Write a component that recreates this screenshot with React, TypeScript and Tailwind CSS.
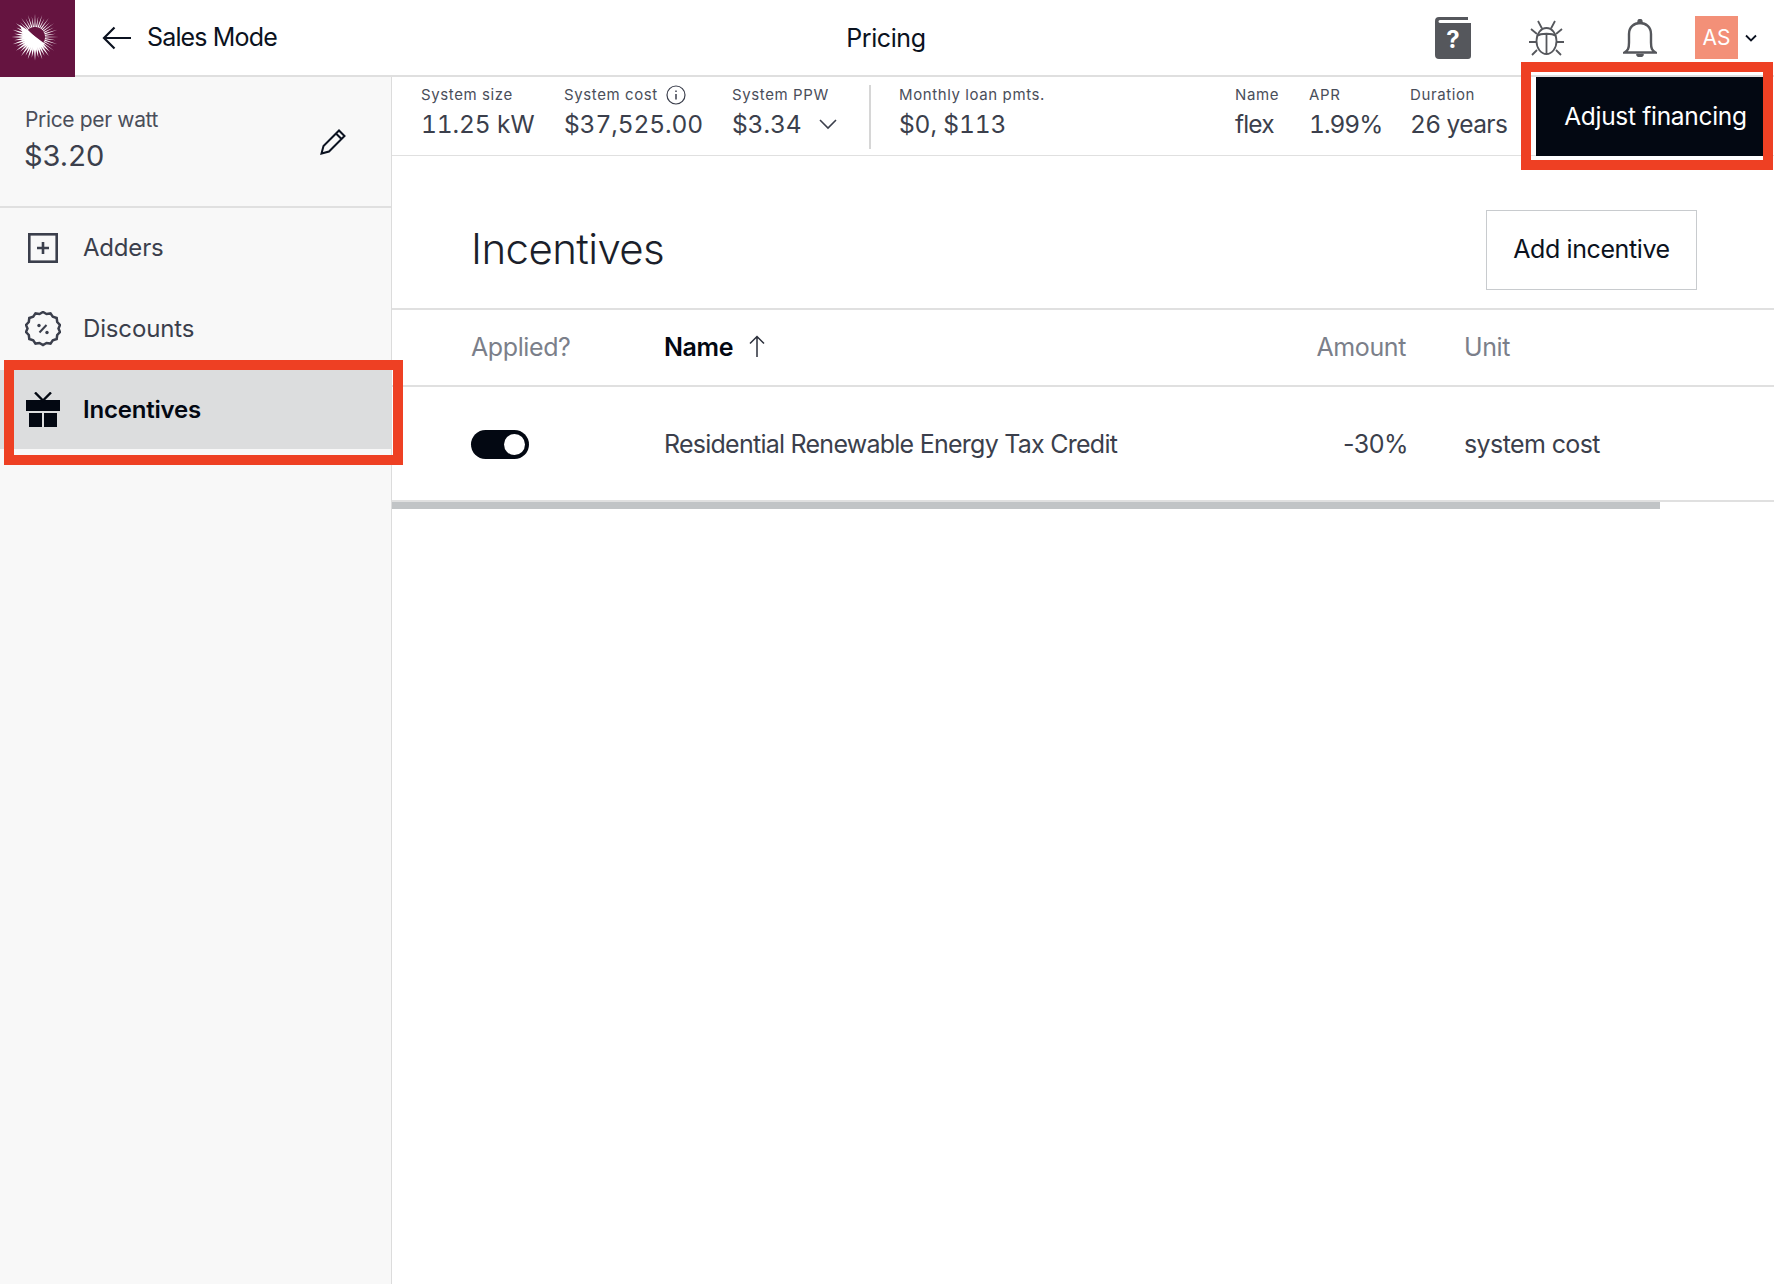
const rays = Array.from({ length: 40 }, (_, i) => i * 9);

function Logo() {
  return (
    <svg width="50" height="50" viewBox="-25 -25 50 50">
      {rays.map((a) => {
        // lower-left half of the burst is solid wedges, upper-right is thin rays
        const rel = ((a - 37 + 360) % 360);
        const solid = rel > 0 && rel < 180;
        const t = (a * Math.PI) / 180;
        const r = a % 18 === 0 ? 23.5 : 21;
        const inner = solid ? 0 : 10;
        const w = solid ? 1.35 : 0.6;
        const cx = Math.cos(t);
        const sy = Math.sin(t);
        const pts = solid
          ? `${cx * inner},${sy * inner} ${cx * 9 - sy * w},${sy * 9 + cx * w} ${cx * r},${sy * r} ${cx * 9 + sy * w},${sy * 9 - cx * w}`
          : `${cx * inner - sy * w},${sy * inner + cx * w} ${cx * r},${sy * r} ${cx * inner + sy * w},${sy * inner - cx * w}`;
        return <polygon key={a} points={pts} fill="#fff" />;
      })}
      <polygon points="-15,-12 10,7 -2,10 -9,6" fill="#fff" />
    </svg>
  );
}

function Stat({ label, value, className, valueClass, extra, chevron }: { label: string; value: string; className: string; valueClass?: string; extra?: boolean; chevron?: boolean }) {
  return (
    <div className={className}>
      <div className="flex items-center gap-2 text-[15px] leading-[20px] tracking-[0.6px] text-[#4a4e5a]">
        {label}
        {extra && (
          <svg width="20" height="20" viewBox="0 0 20 20" fill="none" stroke="#3b3f4c" strokeWidth="1.2">
            <circle cx="10" cy="10" r="9" />
            <path d="M10 9v5.5M10 5.5v1.6" strokeWidth="1.5" />
          </svg>
        )}
      </div>
      <div className={`mt-[3px] flex items-center text-[24.5px] leading-[32px] text-[#3b3f4c] tabular-nums ${valueClass ?? 'tracking-[-0.1px]'}`}>
        {value}
        {chevron && (
          <svg className="ml-[17px]" width="20" height="12" viewBox="0 0 20 12" fill="none" stroke="#3b3f4c" strokeWidth="1.6">
            <path d="M2 2l8 8 8-8" />
          </svg>
        )}
      </div>
    </div>
  );
}

export default function App() {
  return (
    <div className="relative flex h-[1284px] w-[1774px] flex-col overflow-hidden bg-white font-['Inter',sans-serif]">
      <header className="flex h-[77px] shrink-0 items-start border-b-2 border-[#dfdfdf]">
        <div className="flex h-[77px] w-[75px] shrink-0 items-center justify-center bg-[#651440] pb-[3px] pr-[5px]">
          <Logo />
        </div>
        <div className="ml-[27px] flex h-[75px] items-center">
          <svg width="30" height="24" viewBox="0 0 30 24" fill="none" stroke="#0b1220" strokeWidth="2.2">
            <path d="M29 12H2M12.5 1.5L2 12l10.5 10.5" />
          </svg>
          <span className="ml-[15px] pt-[1px] text-[25px] tracking-[-0.85px] text-[#0b1220]">Sales Mode</span>
        </div>
        <div className="ml-[569px] flex h-[75px] w-[80px] items-center justify-center pt-[2px] text-[25px] tracking-[-0.4px] text-[#0b1220]">Pricing</div>
        <div className="ml-[509px] flex h-[75px] items-center">
          <div className="relative h-[42px] w-[36px]">
            <svg width="36" height="42" viewBox="0 0 36 42">
              <path d="M4 0h29v3H5C3 3 3 6 5 6h31v33a3 3 0 0 1-3 3H4a4 4 0 0 1-4-4V4a4 4 0 0 1 4-4z" fill="#55575c" />
            </svg>
            <span className="absolute left-0 top-[8px] w-full text-center text-[24px] font-bold leading-[30px] text-white">?</span>
          </div>
          <svg className="ml-[58px]" width="36" height="36" viewBox="0 0 36 36" fill="none" stroke="#55575c" strokeWidth="1.8">
            <ellipse cx="17.5" cy="21" rx="10" ry="13" />
            <path d="M8 16c4-3 15-3 19 0M17.5 14.5V34M13 8.5L9 1M22 8.5L26 1M8 14L2 9M27 14l6-5M0 22h7.5M27.5 22H35M8 30l-5 5M27 30l5 5" />
          </svg>
          <svg className="ml-[58px]" width="34" height="38" viewBox="0 0 34 38" fill="none" stroke="#55575c" strokeWidth="2.4">
            <path d="M1.5 33.5c3.5-2 4.5-4 4.5-10V15c0-7 5-11 11-11s11 4 11 11v8.500c0 6 1 8 4.500 10z" />
            <circle cx="17" cy="2.500" r="1.500" fill="#55575c" />
            <path d="M14 35c1 3 5 3 6 0" fill="#55575c" />
          </svg>
          <div className="ml-[38px] flex h-[43px] w-[43px] items-center justify-center bg-[#f39078] text-[21px] text-white">AS</div>
          <svg className="ml-[7px]" width="12" height="8" viewBox="0 0 12 8" fill="none" stroke="#0b1220" strokeWidth="1.8">
            <path d="M1 1.5l5 5 5-5" />
          </svg>
        </div>
      </header>

      <div className="flex min-h-0 flex-1">
        <aside className="w-[392px] shrink-0 border-r border-[#dcdcdc] bg-[#f8f8f8]">
          <div className="flex h-[131px] items-center justify-between border-b-2 border-[#e0e0e0] pl-[25px] pr-[44px]">
            <div className="-mt-[3px]">
              <div className="text-[21px] leading-[28px] tracking-[-0.35px] text-[#4a4e5a]">Price per watt</div>
              <div className="mt-[4px] -ml-[1px] text-[29px] leading-[36px] text-[#3b3f4c]">$3.20</div>
            </div>
            <svg width="27" height="27" viewBox="0 0 27 27" fill="none" stroke="#0b1220" strokeWidth="2">
              <path d="M1.5 25.5l2-7.500L19 2.500l5.500 5.500L9 23.500zM16 5.500l5.500 5.500" />
            </svg>
          </div>
          <nav>
            <div className="flex h-[79px] items-center pl-[28px] text-[24px] tracking-[-0.2px] text-[#3b3f4c]">
              <svg width="30" height="30" viewBox="0 0 30 30" fill="none" stroke="#3b3f4c" strokeWidth="2.6">
                <rect x="1.300" y="1.300" width="27.400" height="27.400" />
                <path d="M15 9v12M9 15h12" />
              </svg>
              <span className="ml-[25px]">Adders</span>
            </div>
            <div className="flex h-[83px] items-center pl-[25px] text-[24px] tracking-[-0.15px] text-[#3b3f4c]">
              <svg width="36" height="36" viewBox="0 0 36 36" fill="none" stroke="#3b3f4c" strokeWidth="2.5">
                <path d="M18 1.500l3.500 2 4-.6 2.300 3.300 3.900 1.300.5 4 2.800 3-1.500 3.500 1.500 3.500-2.800 3-.5 4-3.900 1.300-2.300 3.300-4-.6-3.500 2-3.500-2-4 .6-2.300-3.300-3.900-1.300-.5-4-2.800-3 1.500-3.500-1.500-3.500 2.800-3 .5-4 3.900-1.300 2.300-3.300 4 .6z" transform="translate(0 -0.5)" />
                <path d="M21.500 14l-7 7.500" strokeWidth="2" />
                <circle cx="14" cy="14.500" r="1.700" fill="#3b3f4c" stroke="none" />
                <circle cx="22" cy="21.500" r="1.700" fill="#3b3f4c" stroke="none" />
              </svg>
              <span className="ml-[22px]">Discounts</span>
            </div>
            <div className="flex h-[79px] items-center bg-[#dcddde] pl-[26px] text-[24px] font-semibold tracking-[-0.2px] text-[#030812]">
              <svg width="34" height="36" viewBox="0 0 34 36" fill="#030812">
                <path d="M0 8h34v11H0zM3 21h13v14H3zM18 21h13v14H18z" />
                <path d="M9 0.500l8 8 8-8" fill="none" stroke="#030812" strokeWidth="2.4" />
              </svg>
              <span className="ml-[23px]">Incentives</span>
            </div>
          </nav>
        </aside>

        <main className="min-w-0 flex-1">
          <div className="relative flex h-[79px] items-start border-b border-[#e0e0e0] pt-[8px]">
            <Stat className="ml-[29px] w-[143px]" label="System size" value="11.25 kW" />
            <Stat className="w-[168px]" label="System cost" value="$37,525.00" extra />
            <Stat className="w-[137px]" label="System PPW" value="$3.34" chevron />
            <div className="h-[64px] w-[2px] bg-[#d6d6d6]" />
            <Stat className="ml-[28px] w-[336px]" label="Monthly loan pmts." value="$0, $113" />
            <Stat className="w-[74px]" label="Name" value="flex" valueClass="tracking-[-0.85px]" />
            <Stat className="w-[101px]" label="APR" value="1.99%" valueClass="tracking-[-1px]" />
            <Stat className="w-[110px]" label="Duration" value="26 years" valueClass="tracking-[-0.6px]" />
            <button className="absolute right-[11px] top-0 flex h-[79px] w-[227px] items-center justify-center bg-[#030812] pl-[12px] text-[24.5px] tracking-[-0.3px] text-white">
              Adjust financing
            </button>
          </div>

          <div className="flex h-[152px] items-start justify-between pl-[79px] pr-[77px] pt-[54px]">
            <h1 className="pt-[10px] text-[42px] leading-[58px] font-light tracking-[-0.6px] text-[#1b1f2b]">Incentives</h1>
            <button className="h-[80px] w-[211px] border border-[#c8cbce] text-[25px] tracking-[-0.4px] text-[#0b1220]">Add incentive</button>
          </div>

          <div className="flex h-[79px] items-center border-y-2 border-[#e0e0e0] text-[25px] tracking-[-0.4px] text-[#7b7f8a]">
            <div className="ml-[79px] w-[193px]">Applied?</div>
            <div className="flex w-[642px] items-center font-semibold text-[#030812]">
              Name
              <svg className="mb-[4px] ml-[16px]" width="16" height="22" viewBox="0 0 16 22" fill="none" stroke="#2b2f3b" strokeWidth="1.5">
                <path d="M8 22V1.500M1 8.500l7-7 7 7" />
              </svg>
            </div>
            <div className="w-[100px] text-right">Amount</div>
            <div className="ml-[58px]">Unit</div>
          </div>

          <div className="flex h-[115px] items-center border-b-2 border-[#e0e0e0] pt-[2px] text-[25px] tracking-[-0.3px] text-[#3b3f4c]">
            <div className="ml-[79px] w-[193px]">
              <div className="flex h-[29px] w-[58px] items-center justify-end rounded-full bg-[#030812] pr-[4px]">
                <div className="h-[21px] w-[21px] rounded-full bg-white" />
              </div>
            </div>
            <div className="w-[642px] tracking-[-0.75px]">Residential Renewable Energy Tax Credit</div>
            <div className="w-[102px] text-right tracking-[-0.5px]">-30%</div>
            <div className="ml-[56px] tracking-[-0.6px]">system cost</div>
          </div>
          <div className="h-[7px] w-[1268px] bg-[#c1c4c6]" />
        </main>
      </div>

      <div className="absolute left-[4px] top-[360px] h-[105px] w-[399px] border-[10px] border-[#ee4023]" />
      <div className="absolute left-[1521px] top-[62px] h-[108px] w-[252px] border-[10px] border-[#ee4023]" />
    </div>
  );
}
